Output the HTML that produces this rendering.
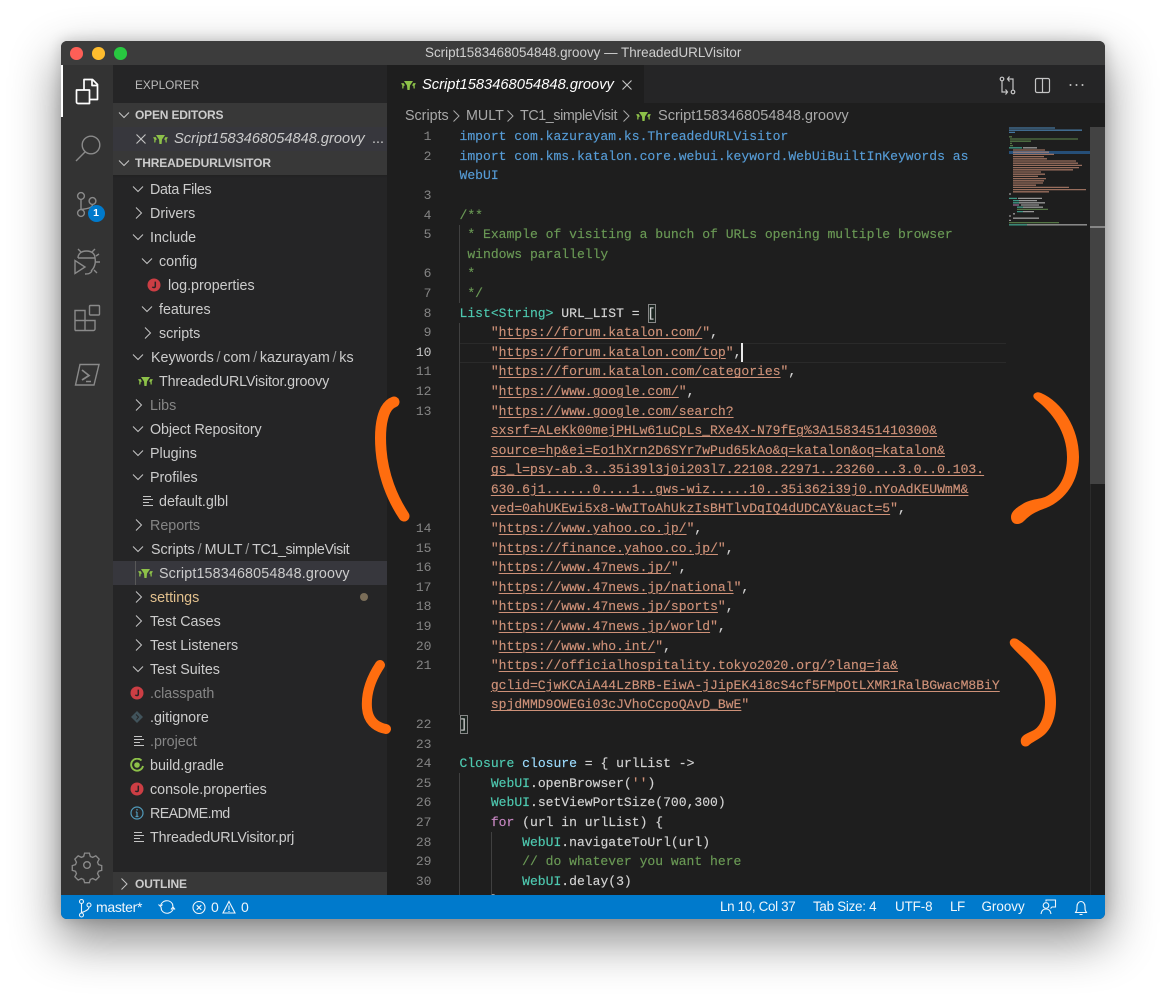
<!DOCTYPE html>
<html><head><meta charset="utf-8"><title>Script1583468054848.groovy — ThreadedURLVisitor</title>
<style>
*{box-sizing:border-box}
html,body{margin:0;padding:0;width:1166px;height:1000px;overflow:hidden;background:#fff;font-family:"Liberation Sans",sans-serif}
.a{position:absolute;white-space:nowrap}
#win{position:absolute;left:61px;top:41px;width:1044px;height:878px;border-radius:6px;box-shadow:0 20px 48px 2px rgba(0,0,0,.45),0 0 14px rgba(0,0,0,.18)}
#p{position:absolute;left:0;top:0;width:1166px;height:1000px;overflow:hidden}
.bg{position:absolute}
.r{position:relative;height:24px;line-height:24px;font-size:14.3px;color:#ccc;white-space:nowrap}
.r svg{position:absolute}
.d{color:#868686}
.h{font-weight:bold;font-size:12px;color:#ccc}
.code{position:absolute;left:72.5px;top:24.2px;font-family:"Liberation Mono",monospace;font-size:13.05px;line-height:19.6px;color:#d4d4d4;-webkit-text-stroke:.15px}
.code div{height:19.6px;white-space:pre}
.nums{position:absolute;left:387px;width:44.5px;top:127.2px;text-align:right;font-family:"Liberation Mono",monospace;font-size:13.05px;line-height:19.6px;color:#858585}
.nums div{height:19.6px;white-space:pre}
.k{color:#569cd6}.c{color:#6a9955}.t{color:#4ec9b0}.s{color:#ce9178}.v{color:#9cdcfe}.f{color:#c586c0}
u{color:#ce9178;text-decoration:underline;text-underline-offset:2px;text-decoration-thickness:1px}
.st{position:absolute;top:895px;height:24px;line-height:24px;font-size:13.4px;color:#f0f6fb;white-space:nowrap}
.crumb{position:absolute;top:107px;line-height:18px;font-size:14.3px;color:#a9a9a9;white-space:nowrap}
.sl{color:#999}
</style></head><body>
<svg width="0" height="0" style="position:absolute">
<defs>
<symbol id="gv" viewBox="0 0 15 9"><path fill="#8dc149" d="M3 0h9L9 4.500 8.600 9H6.400L6 4.500zM0 2.400l2.500-.4 1.500 2.400-1.300.5-.3 2.600H1.200L1.300 4.200zM15 2.400l-2.500-.4L11 4.400l1.300.5.300 2.600h1.200l-.1-3.300z"/></symbol>
<symbol id="j" viewBox="0 0 14 14"><circle cx="7" cy="7" r="6.500" fill="#cc3e44"/><path d="M8.300 3.600v4.600c0 1.400-1.900 1.800-3 .7" fill="none" stroke="#2a2225" stroke-width="1.500"/></symbol>
<symbol id="doc" viewBox="0 0 10 10"><path d="M0 .5h8M0 3.500h10M0 6.500h6M0 9.500h10" stroke="#c5c5c5" stroke-width="1.100" fill="none"/></symbol>
</defs></svg>
<div id="win"></div>
<div id="p">
<!-- window backgrounds -->
<div class="bg" style="left:61px;top:41px;width:1044px;height:878px;border-radius:6px;overflow:hidden;background:#1e1e1e">
 <div class="bg" style="left:0;top:0;width:1044px;height:24px;background:#3c3c3c"></div>
 <div class="bg" style="left:0;top:24px;width:52px;height:830px;background:#333"></div>
 <div class="bg" style="left:52px;top:24px;width:274px;height:830px;background:#252526"></div>
 <div class="bg" style="left:326px;top:24px;width:718px;height:38px;background:#252526"></div>
 <div class="bg" style="left:326px;top:24px;width:257px;height:38px;background:#1e1e1e"></div>
 <div class="bg" style="left:0;top:854px;width:1044px;height:24px;background:#007acc"></div>
</div>
<!-- traffic lights -->
<div class="bg" style="left:70px;top:47px;width:12.5px;height:12.5px;border-radius:50%;background:#fe5f57"></div>
<div class="bg" style="left:92px;top:47px;width:12.5px;height:12.5px;border-radius:50%;background:#febc2e"></div>
<div class="bg" style="left:114px;top:47px;width:12.5px;height:12.5px;border-radius:50%;background:#28c840"></div>
<div class="a" style="left:425px;top:45px;line-height:16px;font-size:13.43px;color:#cfcfcf">Script1583468054848.groovy — ThreadedURLVisitor</div>

<!-- activity bar -->
<div class="bg" style="left:61px;top:65px;width:2px;height:52px;background:#fff"></div>
<svg class="a" style="left:61px;top:65px" width="52" height="830" viewBox="61 65 52 830" fill="none" stroke="#8a8a8a" stroke-width="1.4">
 <g stroke="#fff" stroke-width="1.7" stroke-linejoin="round"><path d="M84 90v-10.500h8.500l5 5v15h-8"/><path d="M92 79.500v6h5.500"/><path d="M76.500 90h13v13.500h-11.500a1.500 1.500 0 0 1-1.500-1.500z"/></g>
 <circle cx="91" cy="145" r="8.800"/><path d="M85 152l-9 9"/>
 <circle cx="81" cy="196" r="3.400"/><circle cx="81" cy="213" r="3.400"/><circle cx="92.500" cy="201" r="3.400"/><path d="M81 199.500v10M92.500 204.500c0 3-4 4-11 5"/>
 <path d="M75 260.500v13l10-6.500z"/><path d="M78 258c0-4 3-7 8.500-7s8.500 3 8.500 7c1 5-.5 10-4 13M85 274c3 0 5 0 7-3M78 258h17M81 252l-3-3M92 252l3-3M95.500 262h4.500M96 256l3-2M94 270l3 3"/>
 <path d="M75 310.500h10v20h-9a1 1 0 0 1-1-1zM85 320.500h10v8.500a1.500 1.500 0 0 1-1.500 1.500H75M75 320.500h10"/>
 <rect x="89.500" y="305.500" width="10" height="9.500" rx="1"/>
 <path d="M80 364.500h19l-5 20.500H75.500z"/><path d="M82 370l7 5.500-7 4.500" stroke-width="1.700"/><path d="M86 381.500h5" stroke-width="1.500"/>
 <g transform="translate(87 865)"><circle r="3.300"/><path d="M-2.500-12.500h5l1 3.500 2.500 1 3.300-1.700 3.500 3.500-1.700 3.300 1 2.500 3.400 1v5l-3.400 1-1 2.500 1.700 3.300-3.500 3.500-3.300-1.700-2.500 1-1 3.400h-5l-1-3.400-2.500-1-3.300 1.700-3.500-3.500 1.700-3.300-1-2.500-3.400-1v-5l3.400-1 1-2.500-1.700-3.300 3.500-3.500 3.300 1.700 2.500-1z" transform="scale(.95)"/></g>
</svg>
<div class="bg" style="left:87.5px;top:204.5px;width:17px;height:17px;border-radius:50%;background:#007acc;color:#fff;font:bold 10.5px/17px 'Liberation Sans',sans-serif;text-align:center">1</div>

<!-- sidebar headers -->
<div class="a" style="left:135px;top:77px;line-height:16px;font-size:11.8px;color:#bbb">EXPLORER</div>
<div class="bg" style="left:113px;top:103px;width:274px;height:72px;background:#383838"></div>
<div class="bg" style="left:113px;top:127px;width:274px;height:24px;background:#37373d"></div>
<div class="bg" style="left:113px;top:175px;width:274px;height:3px;background:linear-gradient(#1d1d1d88,#25252600)"></div>
<svg class="a" style="left:118px;top:109px" width="12" height="12" fill="none" stroke="#c5c5c5"><path d="M1 3.500l5 5 5-5"/></svg>
<div class="a h" style="left:135px;top:107px;line-height:16px;letter-spacing:-.18px">OPEN EDITORS</div>
<svg class="a" style="left:135px;top:133px" width="12" height="12" fill="none" stroke="#c5c5c5" stroke-width="1.100"><path d="M1.500 1.500l9 9M10.500 1.500l-9 9"/></svg>
<svg class="a" style="left:153px;top:135px" width="15" height="9"><use href="#gv"/></svg>
<div class="a" style="left:174px;top:131px;line-height:17px;font-size:14.6px;font-style:italic;color:#ccc">Script1583468054848.groovy</div>
<div class="a" style="left:372px;top:131px;line-height:17px;font-size:14.3px;color:#ccc">...</div>
<svg class="a" style="left:118px;top:157px" width="12" height="12" fill="none" stroke="#c5c5c5"><path d="M1 3.500l5 5 5-5"/></svg>
<div class="a h" style="left:135px;top:155px;line-height:16px;letter-spacing:-.13px">THREADEDURLVISITOR</div>

<!-- tree -->
<div class="bg" style="left:113px;top:561px;width:274px;height:24px;background:#37373d"></div>
<div class="bg" style="left:135px;top:561px;width:1px;height:24px;background:#585858"></div>
<div class="a" style="left:113px;top:177px;width:274px">
 <div class="r" style="padding-left:37px;top:1px;letter-spacing:-.3px"><svg style="left:19px;top:5px" width="12" height="12" fill="none" stroke="#c5c5c5"><path d="M1 3.500l5 5 5-5"/></svg>Data Files</div>
 <div class="r" style="padding-left:37px;top:1px"><svg style="left:19px;top:5px" width="12" height="12" fill="none" stroke="#c5c5c5"><path d="M4 .5l5.500 5.500-5.500 5.500"/></svg>Drivers</div>
 <div class="r" style="padding-left:37px;top:1px"><svg style="left:19px;top:5px" width="12" height="12" fill="none" stroke="#c5c5c5"><path d="M1 3.500l5 5 5-5"/></svg>Include</div>
 <div class="r" style="padding-left:46px;top:1px"><svg style="left:28px;top:5px" width="12" height="12" fill="none" stroke="#c5c5c5"><path d="M1 3.500l5 5 5-5"/></svg>config</div>
 <div class="r" style="padding-left:55px;top:1px"><svg style="left:34px;top:4px" width="14" height="14"><use href="#j"/></svg>log.properties</div>
 <div class="r" style="padding-left:46px;top:1px"><svg style="left:28px;top:5px" width="12" height="12" fill="none" stroke="#c5c5c5"><path d="M1 3.500l5 5 5-5"/></svg>features</div>
 <div class="r" style="padding-left:46px;top:1px"><svg style="left:28px;top:5px" width="12" height="12" fill="none" stroke="#c5c5c5"><path d="M4 .5l5.500 5.500-5.500 5.500"/></svg>scripts</div>
 <div class="r" style="padding-left:38px;top:1px;word-spacing:-1.2px"><svg style="left:19px;top:5px" width="12" height="12" fill="none" stroke="#c5c5c5"><path d="M1 3.500l5 5 5-5"/></svg>Keywords <span class="sl">/</span> com <span class="sl">/</span> kazurayam <span class="sl">/</span> ks</div>
 <div class="r" style="padding-left:46px;top:1px;letter-spacing:-.17px"><svg style="left:25px;top:6.5px" width="15" height="9"><use href="#gv"/></svg>ThreadedURLVisitor.groovy</div>
 <div class="r d" style="padding-left:37px;top:1px"><svg style="left:19px;top:5px" width="12" height="12" fill="none" stroke="#c5c5c5"><path d="M4 .5l5.500 5.500-5.500 5.500"/></svg>Libs</div>
 <div class="r" style="padding-left:37px;top:1px;letter-spacing:-.12px"><svg style="left:19px;top:5px" width="12" height="12" fill="none" stroke="#c5c5c5"><path d="M1 3.500l5 5 5-5"/></svg>Object Repository</div>
 <div class="r" style="padding-left:37px;top:1px"><svg style="left:19px;top:5px" width="12" height="12" fill="none" stroke="#c5c5c5"><path d="M1 3.500l5 5 5-5"/></svg>Plugins</div>
 <div class="r" style="padding-left:37px;top:1px"><svg style="left:19px;top:5px" width="12" height="12" fill="none" stroke="#c5c5c5"><path d="M1 3.500l5 5 5-5"/></svg>Profiles</div>
 <div class="r" style="padding-left:46px;top:1px"><svg style="left:30px;top:6px" width="10" height="10"><use href="#doc"/></svg>default.glbl</div>
 <div class="r d" style="padding-left:37px;top:1px"><svg style="left:19px;top:5px" width="12" height="12" fill="none" stroke="#c5c5c5"><path d="M4 .5l5.500 5.500-5.500 5.500"/></svg>Reports</div>
 <div class="r" style="padding-left:38px;top:1px;word-spacing:-1px"><svg style="left:19px;top:5px" width="12" height="12" fill="none" stroke="#c5c5c5"><path d="M1 3.500l5 5 5-5"/></svg>Scripts <span class="sl">/</span> MULT <span class="sl">/</span> <span style="letter-spacing:-.4px">TC1_simpleVisit</span></div>
 <div class="r" style="padding-left:46px;top:1px;letter-spacing:.15px"><svg style="left:25px;top:6.5px" width="15" height="9"><use href="#gv"/></svg>Script1583468054848.groovy</div>
 <div class="r" style="padding-left:37px;top:1px;color:#e2c08d"><svg style="left:19px;top:5px" width="12" height="12" fill="none" stroke="#c5c5c5"><path d="M4 .5l5.500 5.500-5.500 5.500"/></svg>settings<svg style="left:247px;top:7px" width="8" height="8"><circle cx="4" cy="4" r="4" fill="#7a6d58"/></svg></div>
 <div class="r" style="padding-left:37px;top:1px"><svg style="left:19px;top:5px" width="12" height="12" fill="none" stroke="#c5c5c5"><path d="M4 .5l5.500 5.500-5.500 5.500"/></svg>Test Cases</div>
 <div class="r" style="padding-left:37px;top:1px"><svg style="left:19px;top:5px" width="12" height="12" fill="none" stroke="#c5c5c5"><path d="M4 .5l5.500 5.500-5.500 5.500"/></svg>Test Listeners</div>
 <div class="r" style="padding-left:37px;top:1px"><svg style="left:19px;top:5px" width="12" height="12" fill="none" stroke="#c5c5c5"><path d="M1 3.500l5 5 5-5"/></svg>Test Suites</div>
 <div class="r d" style="padding-left:37px;top:1px"><svg style="left:17px;top:4px" width="14" height="14"><use href="#j"/></svg>.classpath</div>
 <div class="r" style="padding-left:37px;top:1px"><svg style="left:18px;top:5px" width="12" height="12"><path d="M6 0l6 6-6 6-6-6z" fill="#41535b"/><path d="M5 3.500l2.500 2.500-2 2.500" stroke="#252526" fill="none"/></svg>.gitignore</div>
 <div class="r d" style="padding-left:37px;top:1px"><svg style="left:21px;top:6px" width="10" height="10"><use href="#doc"/></svg>.project</div>
 <div class="r" style="padding-left:37px;top:1px"><svg style="left:17px;top:4px" width="14" height="14" fill="none"><path d="M11.500 2.500A6 6 0 1 0 13 8" stroke="#8dc149" stroke-width="1.900"/><circle cx="7" cy="7" r="2.800" fill="#8dc149"/></svg>build.gradle</div>
 <div class="r" style="padding-left:37px;top:1px"><svg style="left:17px;top:4px" width="14" height="14"><use href="#j"/></svg>console.properties</div>
 <div class="r" style="padding-left:37px;top:1px;letter-spacing:-.6px"><svg style="left:17px;top:4px" width="14" height="14" fill="none" stroke="#519aba"><circle cx="7" cy="7" r="6" stroke-width="1.200"/><path d="M7 6v4.500M5.500 10.500h3M5.800 6H7" stroke-width="1.200"/><circle cx="7" cy="3.800" r=".8" fill="#519aba" stroke="none"/></svg>README.md</div>
 <div class="r" style="padding-left:37px;top:1px;letter-spacing:-.14px"><svg style="left:21px;top:6px" width="10" height="10"><use href="#doc"/></svg>ThreadedURLVisitor.prj</div>
</div>
<!-- outline -->
<div class="bg" style="left:113px;top:872px;width:274px;height:23px;background:#383838"></div>
<svg class="a" style="left:118px;top:878px" width="12" height="12" fill="none" stroke="#c5c5c5"><path d="M3.500 .5l5.500 5.500-5.500 5.500"/></svg>
<div class="a h" style="left:135px;top:876px;line-height:16px;letter-spacing:-.1px">OUTLINE</div>

<!-- tab -->
<svg class="a" style="left:401px;top:81px" width="15" height="9"><use href="#gv"/></svg>
<div class="a" style="left:422px;top:76px;line-height:18px;font-size:14.7px;font-style:italic;color:#fff">Script1583468054848.groovy</div>
<svg class="a" style="left:621px;top:79px" width="12" height="12" fill="none" stroke="#c5c5c5" stroke-width="1.100"><path d="M1.500 1.500l9 9M10.500 1.500l-9 9"/></svg>
<svg class="a" style="left:995px;top:72px" width="95" height="26" fill="none" stroke="#c5c5c5" stroke-width="1.200">
 <circle cx="7" cy="7" r="1.800"/><circle cx="18" cy="20" r="1.800"/><path d="M7 9v11h5M18 18V7h-5M14.500 4.500L12.500 7l2 2.500M10.500 17.500l2 2.500-2 2.500"/>
 <rect x="40.500" y="6.500" width="14" height="14" rx="1.500"/><path d="M47.500 6.500v14"/>
 <g fill="#c5c5c5" stroke="none"><circle cx="75.500" cy="13" r="1"/><circle cx="81.500" cy="13" r="1"/><circle cx="87.500" cy="13" r="1"/></g>
</svg>
<!-- breadcrumbs -->
<div class="crumb" style="left:405px">Scripts</div>
<div class="crumb" style="left:466px">MULT</div>
<div class="crumb" style="left:520px;letter-spacing:-.4px">TC1_simpleVisit</div>
<div class="crumb" style="left:658px;font-size:14.6px">Script1583468054848.groovy</div>
<svg class="a" style="left:450px;top:109px" width="190" height="14" fill="none" stroke="#a9a9a9"><path d="M3.500 1.500l5.500 5.500-5.500 5.500M57.500 1.500l5.500 5.500-5.500 5.500M173.500 1.500l5.500 5.500-5.500 5.500"/></svg>
<svg class="a" style="left:636px;top:112px" width="15" height="9"><use href="#gv"/></svg>

<!-- editor decorations -->
<div class="bg" style="left:459.5px;top:343px;width:546px;height:19.6px;border-top:1px solid #2a2a2a;border-bottom:1px solid #2a2a2a"></div>
<div class="bg" style="left:459px;top:225px;width:1px;height:78px;background:#404040"></div>
<div class="bg" style="left:459px;top:323px;width:1px;height:392px;background:#404040"></div>
<div class="bg" style="left:459px;top:773px;width:1px;height:122px;background:#404040"></div>
<div class="bg" style="left:491px;top:832px;width:1px;height:63px;background:#404040"></div>
<div class="bg" style="left:647.5px;top:304px;width:8px;height:19px;border:1px solid #888;background:#0e3a2a33"></div>
<div class="bg" style="left:459.5px;top:715px;width:8px;height:19px;border:1px solid #888;background:#0e3a2a33"></div>

<!-- numbers -->
<div class="nums"><div>1</div><div>2</div><div> </div><div>3</div><div>4</div><div>5</div><div> </div><div>6</div><div>7</div><div>8</div><div>9</div><div style="color:#c6c6c6">10</div><div>11</div><div>12</div><div>13</div><div> </div><div> </div><div> </div><div> </div><div> </div><div>14</div><div>15</div><div>16</div><div>17</div><div>18</div><div>19</div><div>20</div><div>21</div><div> </div><div> </div><div>22</div><div>23</div><div>24</div><div>25</div><div>26</div><div>27</div><div>28</div><div>29</div><div>30</div></div>

<!-- code -->
<div style="position:absolute;left:387px;top:103px;width:703px;height:792px;overflow:hidden">
<div class="code">
<div class="k">import com.kazurayam.ks.ThreadedURLVisitor</div>
<div class="k">import com.kms.katalon.core.webui.keyword.WebUiBuiltInKeywords as</div>
<div class="k">WebUI</div>
<div> </div>
<div class="c">/**</div>
<div class="c"> * Example of visiting a bunch of URLs opening multiple browser</div>
<div class="c"> windows parallelly</div>
<div class="c"> *</div>
<div class="c"> */</div>
<div><span class="t">List&lt;String&gt;</span> URL_LIST = [</div>
<div>    <span class="s">"<u>https://forum.katalon.com/</u>"</span>,</div>
<div>    <span class="s">"<u>https://forum.katalon.com/top</u>"</span>,</div>
<div>    <span class="s">"<u>https://forum.katalon.com/categories</u>"</span>,</div>
<div>    <span class="s">"<u>https://www.google.com/</u>"</span>,</div>
<div>    <span class="s">"<u>https://www.google.com/search?</u></span></div>
<div>    <u>sxsrf=ALeKk00mejPHLw61uCpLs_RXe4X-N79fEg%3A1583451410300&amp;</u></div>
<div>    <u>source=hp&amp;ei=Eo1hXrn2D6SYr7wPud65kAo&amp;q=katalon&amp;oq=katalon&amp;</u></div>
<div>    <u>gs_l=psy-ab.3..35i39l3j0i203l7.22108.22971..23260...3.0..0.103.</u></div>
<div>    <u>630.6j1......0....1..gws-wiz.....10..35i362i39j0.nYoAdKEUWmM&amp;</u></div>
<div>    <u>ved=0ahUKEwi5x8-WwIToAhUkzIsBHTlvDqIQ4dUDCAY&amp;uact=5</u><span class="s">"</span>,</div>
<div>    <span class="s">"<u>https://www.yahoo.co.jp/</u>"</span>,</div>
<div>    <span class="s">"<u>https://finance.yahoo.co.jp/</u>"</span>,</div>
<div>    <span class="s">"<u>https://www.47news.jp/</u>"</span>,</div>
<div>    <span class="s">"<u>https://www.47news.jp/national</u>"</span>,</div>
<div>    <span class="s">"<u>https://www.47news.jp/sports</u>"</span>,</div>
<div>    <span class="s">"<u>https://www.47news.jp/world</u>"</span>,</div>
<div>    <span class="s">"<u>https://www.who.int/</u>"</span>,</div>
<div>    <span class="s">"<u>https://officialhospitality.tokyo2020.org/?lang=ja&amp;</u></span></div>
<div>    <u>gclid=CjwKCAiA44LzBRB-EiwA-jJipEK4i8cS4cf5FMpOtLXMR1RalBGwacM8BiY</u></div>
<div>    <u>spjdMMD9OWEGi03cJVhoCcpoQAvD_BwE</u><span class="s">"</span></div>
<div>]</div>
<div> </div>
<div><span class="t">Closure</span> <span class="v">closure</span> = { urlList -&gt;</div>
<div>    <span class="t">WebUI</span>.openBrowser(<span class="s">''</span>)</div>
<div>    <span class="t">WebUI</span>.setViewPortSize(700,300)</div>
<div>    <span class="f">for</span> (url in urlList) {</div>
<div>        <span class="t">WebUI</span>.navigateToUrl(url)</div>
<div>        <span class="c">// do whatever you want here</span></div>
<div>        <span class="t">WebUI</span>.delay(3)</div>
<div>    }</div>
</div>
</div>
<div class="bg" style="left:740.5px;top:343px;width:2px;height:19px;background:#e8e8e8"></div>

<!-- minimap -->
<div class="bg" style="left:1009px;top:151px;width:81px;height:2.5px;background:#264f78"></div>
<svg class="a" style="left:0;top:0" width="1166" height="240" fill="none" stroke-width="1.300" opacity=".7">
<path stroke="#569cd6" d="M1009 128h46M1009 130.200h73M1009 132.400h6"/>
<path stroke="#6a9955" d="M1009 136.800h3M1010 139h68M1010 141.200h21M1010 143.400h2M1010 145.600h3"/>
<path stroke="#4ec9b0" d="M1009 147.800h13M1009 198.400h8M1013 200.600h6M1013 202.800h6M1017 207.200h6M1017 211.600h6M1009 224.800h18"/>
<path stroke="#c9c9c9" d="M1023 147.800h14M1018 198.400h24M1019 200.600h18M1019 202.800h26M1021 205h18M1023 207.200h20M1023 211.600h11M1013 213.800h2M1009 216h2M1013 218.200h26M1009 220.400h2M1027 224.800h60"/>
<path stroke="#ce9178" d="M1013 150h32M1013 152.200h36M1013 154.400h41M1013 156.600h31M1013 158.800h34M1013 161h63M1013 163.200h65M1013 165.400h69M1013 167.600h66M1013 169.800h60M1013 172h28M1013 174.200h32M1013 176.400h25M1013 178.600h33M1013 180.800h31M1013 183h30M1013 185.200h23M1013 187.400h56M1013 189.600h73M1013 191.800h36"/>
<path stroke="#c586c0" d="M1013 205h6"/>
<path stroke="#6a9955" d="M1017 209.400h31M1009 222.600h50"/>
<path stroke="#c9c9c9" d="M1009 194h2"/>
</svg>
<!-- scrollbar -->
<div class="bg" style="left:1090px;top:127px;width:1px;height:768px;background:#2b2b2b"></div>
<div class="bg" style="left:1090px;top:127px;width:15px;height:357px;background:#434343"></div>
<div class="bg" style="left:1090px;top:226px;width:15px;height:2px;background:#868686"></div>

<!-- status bar -->
<svg class="a" style="left:75px;top:898px" width="20" height="20" fill="none" stroke="#f0f6fb" stroke-width="1.100"><circle cx="6.500" cy="3.500" r="2"/><circle cx="6.500" cy="17" r="2"/><circle cx="14" cy="7" r="2"/><path d="M6.500 5.500V15M14 9c0 3-4 4.500-7.500 5.500"/></svg>
<div class="st" style="left:96px;font-size:14px;letter-spacing:-.3px">master*</div>
<svg class="a" style="left:158px;top:899px" width="18" height="16" fill="none" stroke="#f0f6fb" stroke-width="1.100"><path d="M2.500 7a6.500 6.500 0 0 1 12-2l.5 3M15.500 9a6.500 6.500 0 0 1-12 2l-.5-3M.5 5.500l2 2 2-2M13 10.500l2-2.500 2 2.500"/></svg>
<svg class="a" style="left:192px;top:900px" width="46" height="15" fill="none" stroke="#f0f6fb" stroke-width="1.100"><circle cx="7" cy="7.500" r="6"/><path d="M4.700 5.200l4.600 4.600M9.300 5.200l-4.600 4.600M37 1.500l6 11.500H31zM37 5.500v4.500M37 11v1"/></svg>
<div class="st" style="left:211px;font-size:14px">0</div>
<div class="st" style="left:241px;font-size:14px">0</div>
<div class="st" style="left:720px;letter-spacing:-.33px">Ln 10, Col 37</div>
<div class="st" style="left:813px;letter-spacing:-.27px">Tab Size: 4</div>
<div class="st" style="left:895px;letter-spacing:-.1px">UTF-8</div>
<div class="st" style="left:950px;letter-spacing:-.5px">LF</div>
<div class="st" style="left:981.5px">Groovy</div>
<svg class="a" style="left:1040px;top:899px" width="50" height="17" fill="none" stroke="#f0f6fb" stroke-width="1.100"><circle cx="6" cy="6.500" r="2.800"/><path d="M1 15c.5-3.500 2.500-5 5-5s4.500 1.500 5 5M6 2.500V1h9.500v7H12l-1.500 1.500M35 13.500c2-1 2-3 2-6s2-5 4-5 4 2 4 5 0 5 2 6zM39.500 15.500h3"/></svg>

<!-- orange marks -->
<svg class="a" style="left:0;top:0;pointer-events:none" width="1166" height="1000">
<g fill="none" stroke="#ff6d0f" stroke-linecap="round">
<path stroke-width="11" d="M394 402C383 406 379 425 381 450C383 475 392 498 404 516"/>
<path stroke-width="10" d="M380 665C370 680 366 695 367 708C368 720 375 727 386 729"/>
</g>
<g fill="#ff6d0f">
<path d="M1034 394Q1037 391 1041 393C1062 402 1079 428 1079 457C1079 480 1066 500 1046 508C1038 511 1032 513 1024 521C1019 526 1011 525 1011 517C1011 512 1016 508 1021 505C1030 499 1036 500 1045 497C1060 490 1067 475 1067 457C1067 432 1052 412 1036 400Q1032 397 1034 394Z"/>
<path d="M1010 641Q1012 637 1017 639C1028 646 1036 655 1044 663C1052 672 1056 688 1056 702C1056 716 1052 728 1044 735C1038 740 1032 742 1028 746C1022 748 1020 743 1021 739C1022 735 1028 733 1034 730C1042 725 1045 713 1045 702C1045 688 1040 678 1032 668C1026 660 1018 654 1012 647Q1009 644 1010 641Z"/>
</g>
</svg>
</div>
</body></html>
